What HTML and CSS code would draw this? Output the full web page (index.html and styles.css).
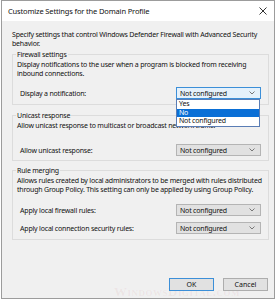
FILE: index.html
```html
<!DOCTYPE html>
<html lang="en">
<head>
  <meta charset="UTF-8">
  <title>Customize Settings for the Domain Profile</title>
  <link rel="stylesheet" href="styles.css">
</head>
<body>
  <div class="window">
    <div class="titlebar">
      <span class="title">Customize Settings for the Domain Profile</span>
      <svg class="close" width="8" height="8" viewBox="0 0 8 8">
        <path d="M0.5 0.5 L7.5 7.5 M7.5 0.5 L0.5 7.5" stroke="#333" stroke-width="1" fill="none"/>
      </svg>
    </div>

    <div class="content">
      <p class="intro">Specify settings that control Windows Defender Firewall with Advanced Security<br>behavior.</p>

      <fieldset class="group firewall">
        <legend>Firewall settings</legend>
        <p class="note">Display notifications to the user when a program is blocked from receiving<br>inbound connections.</p>
        <div class="row">
          <span class="label">Display a notification:</span>
          <div class="select focused">
            <span>Not configured</span>
            <svg class="chevron" width="6" height="4" viewBox="0 0 6 4"><path d="M0.5 0.5 L3 3 L5.5 0.5" stroke="#777" fill="none"/></svg>
            <ul class="dropdown">
              <li>Yes</li>
              <li class="active">No</li>
              <li>Not configured</li>
            </ul>
          </div>
        </div>
      </fieldset>

      <fieldset class="group unicast">
        <legend>Unicast response</legend>
        <p class="note">Allow unicast response to multicast or broadcast network traffic:</p>
        <div class="row">
          <span class="label">Allow unicast response:</span>
          <div class="select">
            <span>Not configured</span>
            <svg class="chevron" width="6" height="4" viewBox="0 0 6 4"><path d="M0.5 0.5 L3 3 L5.5 0.5" stroke="#777" fill="none"/></svg>
          </div>
        </div>
      </fieldset>

      <fieldset class="group merging">
        <legend>Rule merging</legend>
        <p class="note">Allows rules created by local administrators to be merged with rules distributed<br>through Group Policy. This setting can only be applied by using Group Policy.</p>
        <div class="row">
          <span class="label">Apply local firewall rules:</span>
          <div class="select">
            <span>Not configured</span>
            <svg class="chevron" width="6" height="4" viewBox="0 0 6 4"><path d="M0.5 0.5 L3 3 L5.5 0.5" stroke="#777" fill="none"/></svg>
          </div>
        </div>
        <div class="row second">
          <span class="label">Apply local connection security rules:</span>
          <div class="select">
            <span>Not configured</span>
            <svg class="chevron" width="6" height="4" viewBox="0 0 6 4"><path d="M0.5 0.5 L3 3 L5.5 0.5" stroke="#777" fill="none"/></svg>
          </div>
        </div>
      </fieldset>

      <div class="buttons">
        <button class="btn default">OK</button>
        <button class="btn">Cancel</button>
      </div>
    </div>

    <div class="watermark">WindowsDigital.com</div>
  </div>
</body>
</html>
```

FILE: styles.css
```css
body {
  margin: 0;
  background: #ffffff;
  font-family: 'Noto Sans', 'Liberation Sans', sans-serif;
  font-size: 7px;
  color: #111;
}

.window {
  position: relative;
  width: 272px;
  height: 297px;
  margin-left: 1px;
  border: 1px solid #9c9c9c;
  background: #f0f0f0;
  overflow: hidden;
}

.titlebar {
  height: 20px;
  background: #fff;
  display: flex;
  align-items: center;
  justify-content: space-between;
  padding: 0 7px 0 6px;
}

.title {
  font-size: 7.5px;
  letter-spacing: -0.15px;
  color: #111;
}

.content {
  position: relative;
  z-index: 1;
  padding: 9px 5px 0 10px;
}

.intro, .note {
  margin: 0;
  line-height: 9px;
  white-space: nowrap;
  letter-spacing: -0.2px;
}

.group {
  margin: 2px 0 0;
  padding: 0 4px 5px 4px;
  border: 1px solid #dcdcdc;
  min-width: 0;
}

.group legend {
  padding: 0 1px;
  margin-left: -1px;
  line-height: 9px;
  letter-spacing: -0.2px;
}

.group .note {
  margin-top: 1px;
}

.unicast {
  margin-top: 6px;
  padding-bottom: 4px;
}

.merging {
  margin-top: 5px;
}

.row {
  display: flex;
  align-items: center;
  justify-content: space-between;
  padding: 0 3px;
  margin-top: 9px;
  letter-spacing: -0.2px;
}

.unicast .row {
  margin-top: 14px;
}

.merging .row {
  margin-top: 10px;
}

.merging .row.second {
  margin-top: 6px;
}

.select {
  position: relative;
  width: 75px;
  height: 10px;
  border: 1px solid #b4b4b4;
  background: #e1e1e1;
  display: flex;
  align-items: center;
  justify-content: space-between;
  padding: 0 5px 0 3px;
}

.select.focused {
  background: #e5f1fb;
  border-color: #3c8fd8;
}

.dropdown {
  position: absolute;
  top: 11px;
  left: -1px;
  width: 82px;
  margin: 0;
  padding: 0;
  list-style: none;
  background: #fff;
  border: 1px solid #5a7db5;
  z-index: 2;
}

.dropdown li {
  height: 8.5px;
  line-height: 8.5px;
  padding-left: 2px;
}

.dropdown li.active {
  background: #0a6fd6;
  color: #fff;
}

.buttons {
  display: flex;
  justify-content: flex-end;
  gap: 9px;
  margin-top: 38px;
  padding-right: 1px;
}

.btn {
  width: 45px;
  height: 13px;
  padding: 0;
  font-family: inherit;
  font-size: 7px;
  color: #111;
  background: #e1e1e1;
  border: 1px solid #adadad;
}

.btn.default {
  border-color: #3c8fd8;
}

.watermark {
  position: absolute;
  left: 112px;
  bottom: -2px;
  font-family: 'Liberation Serif', serif;
  font-size: 13px;
  font-weight: bold;
  font-variant: small-caps;
  color: rgba(190, 70, 70, 0.07);
  letter-spacing: 0.5px;
}
```
